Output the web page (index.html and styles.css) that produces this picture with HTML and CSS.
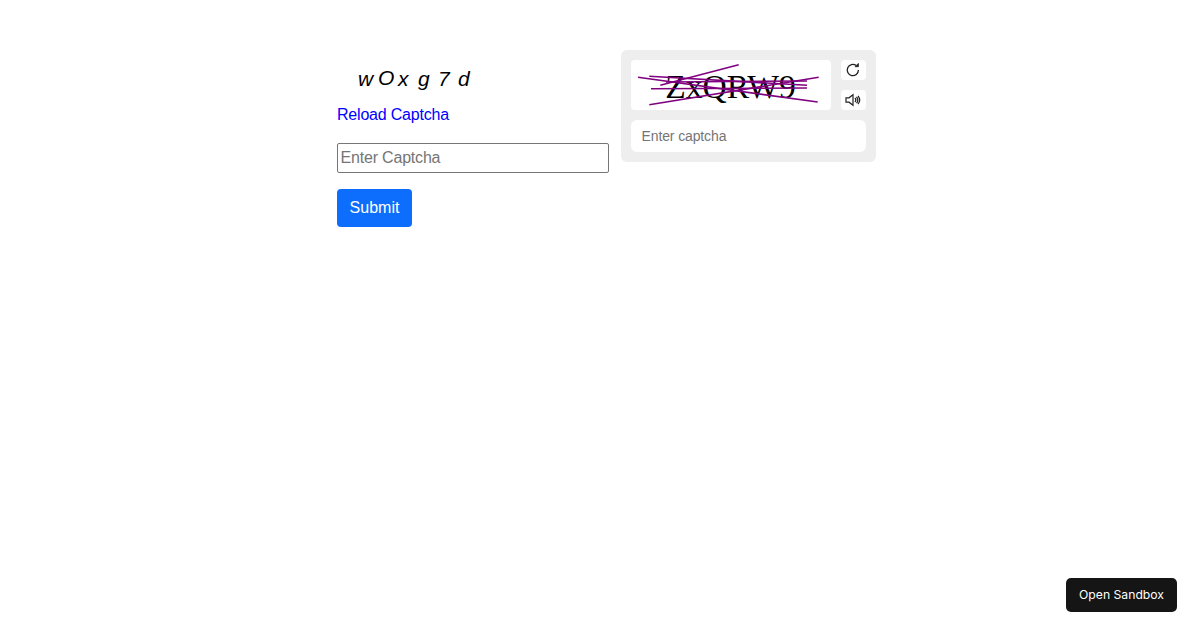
FILE: index.html
```html
<!DOCTYPE html>
<html lang="en">
<head>
<meta charset="utf-8">
<title>Captcha</title>
<link rel="stylesheet" href="styles.css">
</head>
<body>
<main class="page">
  <form class="simple">
    <div class="letters">
      <span class="ch">w</span><span class="ch raised">O</span><span class="ch">x</span><span class="ch">g</span><span class="ch">7</span><span class="ch">d</span>
    </div>
    <a class="reload" href="#">Reload Captcha</a>
    <input class="plain-input" type="text" placeholder="Enter Captcha">
    <button class="submit" type="button">Submit</button>
  </form>
  <section class="panel">
    <div class="top">
      <div class="canvas">
        <span class="code">ZxQRW9</span>
        <svg class="noise" viewBox="0 0 200 50" width="200" height="50" aria-hidden="true">
          <g stroke="#800080" stroke-width="1.6" fill="none">
            <path d="M7 17.3 186.7 42"/>
            <path d="M18.3 44.7 187.7 17.3"/>
            <path d="M29.3 25.3 107.7 4.7"/>
            <path d="M18.3 16.3 176 25.3"/>
            <path d="M20 28.7 176 28"/>
            <path d="M35 22 176 21"/>
          </g>
        </svg>
      </div>
      <div class="actions">
        <button class="icon-btn" type="button" aria-label="Reload">
          <svg viewBox="0 0 16 16" width="16" height="16" fill="none" stroke="#222" stroke-width="1.3"><path d="M13.4 8A5.6 5.6 0 1 1 11.2 3.6"/><path d="M13.4 1.4v3.3h-3.3z" fill="#222" stroke-width="0.8"/></svg>
        </button>
        <button class="icon-btn" type="button" aria-label="Play audio">
          <svg viewBox="0 0 16 16" width="16" height="16" fill="none" stroke="#222" stroke-width="1.2"><path d="M1 5.8h3l4-3v10.4l-4-3H1z"/><path d="M10 6a3 3 0 0 1 0 4"/><path d="M11.5 4.8a5 5 0 0 1 0 6.4"/><path d="M13 3.8a6.6 6.6 0 0 1 0 8.4"/></svg>
        </button>
      </div>
    </div>
    <input class="panel-input" type="text" placeholder="Enter captcha">
  </section>
</main>
<button class="sandbox" type="button">Open Sandbox</button>
</body>
</html>
```
FILE: styles.css
```css
* { box-sizing: border-box; }
html, body { margin: 0; height: 100%; background: #fff; }
body { font-family: "Liberation Sans", Arial, sans-serif; color: #000; }
.page { display: flex; justify-content: center; align-items: flex-start; gap: 12px; padding: 50px 0 0 0; margin-left: 13px; }
.simple { display: flex; flex-direction: column; align-items: flex-start; width: 272px; }
.letters { display: flex; padding: 16px 0 0 21px; height: 41px; font-style: italic; font-size: 21px; line-height: 26px; }
.ch { display: block; width: 20px; }
.raised { margin-top: -1px; }
.reload { margin-top: 15px; font-size: 16px; line-height: 18px; letter-spacing: -0.2px; color: #00f; text-decoration: none; }
.plain-input { margin-top: 19px; width: 272px; height: 30px; padding: 1px 2.6px; border: 1px solid #767676; border-radius: 2px; font: 16px "Liberation Sans", Arial, sans-serif; letter-spacing: -0.2px; background: #fff; }
.plain-input::placeholder { color: #757575; }
.submit { margin-top: 16px; width: 75px; height: 38px; padding: 0; border: 0; border-radius: 4px; background: #0d6efd; color: #fff; font: 16px "Liberation Sans", Arial, sans-serif; }
.panel { width: 255px; padding: 10px; background: #eee; border-radius: 6px; display: flex; flex-direction: column; gap: 10px; }
.top { display: flex; justify-content: space-between; }
.canvas { position: relative; width: 200px; height: 50px; background: #fff; border-radius: 4px; display: flex; justify-content: center; align-items: center; overflow: hidden; }
.code { font-family: "Liberation Serif", "Times New Roman", serif; font-size: 33.6px; line-height: 54px; padding: 4px 1px 0 0; color: #000; }
.noise { position: absolute; inset: 0; }
.actions { display: flex; flex-direction: column; justify-content: space-between; }
.icon-btn { width: 25px; height: 20px; padding: 0 1px 0 0; border: 0; background: #fff; border-radius: 4px; display: flex; align-items: center; justify-content: center; }
.panel-input { width: 100%; height: 32px; padding: 0 11px 0 10.5px; border: 0; border-radius: 6px; background: #fff; font: 14px "Liberation Sans", Arial, sans-serif; letter-spacing: -0.12px; }
.panel-input::placeholder { color: #757575; }
.sandbox { position: fixed; right: 23px; bottom: 18px; width: 111px; height: 34px; padding: 0 0 1px; border: 0; border-radius: 5px; background: #151515; color: #fff; font: 12.2px Inter, "Liberation Sans", sans-serif; }
```
